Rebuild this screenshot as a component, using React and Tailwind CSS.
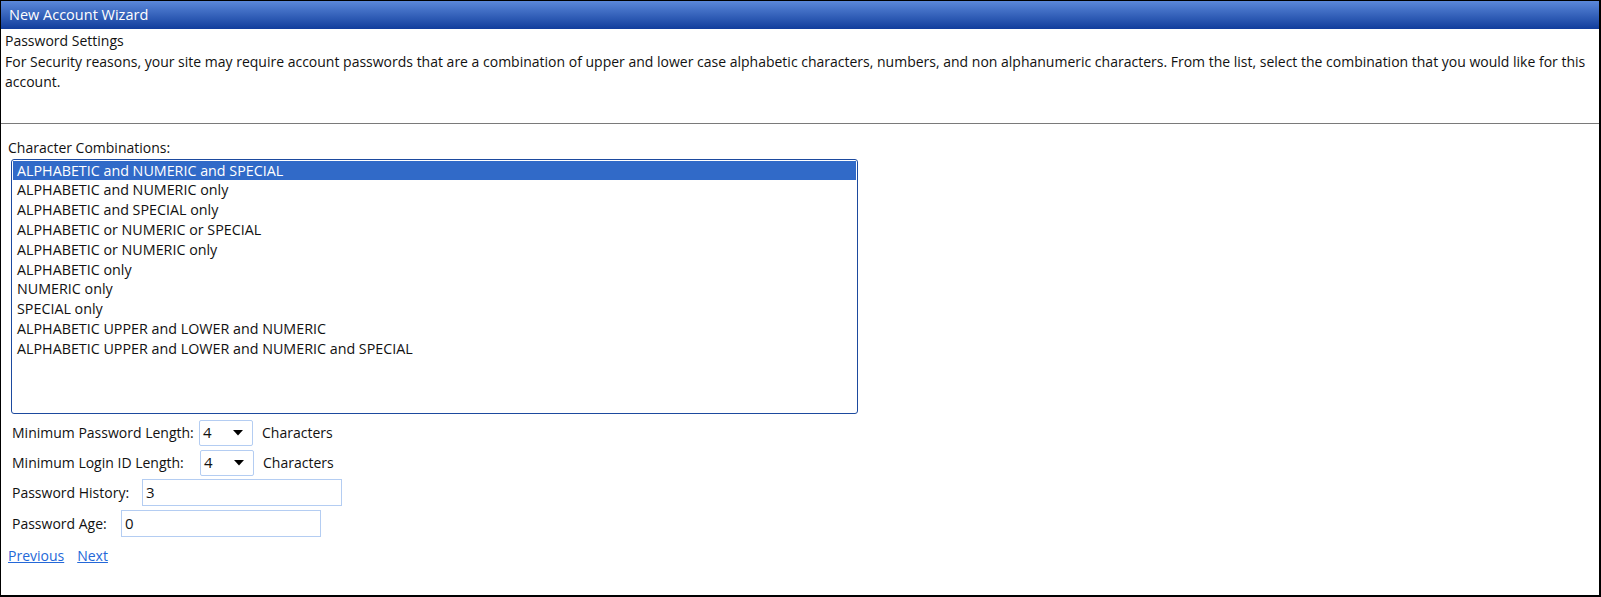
import React from "react";

const items = [
  "ALPHABETIC and NUMERIC and SPECIAL",
  "ALPHABETIC and NUMERIC only",
  "ALPHABETIC and SPECIAL only",
  "ALPHABETIC or NUMERIC or SPECIAL",
  "ALPHABETIC or NUMERIC only",
  "ALPHABETIC only",
  "NUMERIC only",
  "SPECIAL only",
  "ALPHABETIC UPPER and LOWER and NUMERIC",
  "ALPHABETIC UPPER and LOWER and NUMERIC and SPECIAL",
];

function Select({ value }) {
  return (
    <div className="flex h-[26px] w-[54px] items-center justify-between rounded-[2px] border border-[#b4cdf2] bg-white pl-[3px] pr-[9px]">
      <span className="text-[15px]">{value}</span>
      <svg width="10" height="6" viewBox="0 0 10 6">
        <path d="M0 0 H10 L5 5.5 Z" fill="#000" />
      </svg>
    </div>
  );
}

export default function App() {
  return (
    <div
      className="box-border flex h-[597px] w-[1601px] flex-col border-t border-l border-r-2 border-b-2 border-black bg-white text-[14px] text-[#111]"
      style={{ fontFamily: '"Open Sans", "Noto Sans", sans-serif' }}
    >
      <div className="flex h-[28px] items-center bg-gradient-to-b from-[#5b88da] to-[#113d9c] pl-[8px] text-[14.5px] text-white">
        New Account Wizard
      </div>
      <div className="h-[94px] pl-[4px] pt-[2px] leading-[20.5px]">
        <div>Password Settings</div>
        <div className="whitespace-nowrap">
          For Security reasons, your site may require account passwords that are a combination of upper and lower case alphabetic characters, numbers, and non alphanumeric characters. From the list, select the combination that you would like for this
        </div>
        <div>account.</div>
      </div>
      <div className="h-px bg-[#7a7a7a]" />
      <div className="pl-[7px] pt-[14px] leading-[20px]">Character Combinations:</div>
      <div className="ml-[10px] mt-[1px] h-[255px] w-[847px] rounded-[3px] border-[1.5px] border-[#1d4a9e] px-[1px] pt-0">
        {items.map((t, i) => (
          <div
            key={t}
            className={
              "flex h-[19.8px] items-center pl-[4px] text-[14.3px] " +
              (i === 0 ? "mt-[0.5px] bg-[#316ac8] text-white" : "")
            }
          >
            {t}
          </div>
        ))}
      </div>
      <div className="mt-[5px] flex flex-col gap-[3px] pl-[11px]">
        <div className="flex h-[27px] items-center">
          <span className="w-[187px]">Minimum Password Length:</span>
          <Select value="4" />
          <span className="ml-[9px]">Characters</span>
        </div>
        <div className="flex h-[27px] items-center">
          <span className="w-[188px]">Minimum Login ID Length:</span>
          <Select value="4" />
          <span className="ml-[9px]">Characters</span>
        </div>
        <div className="flex h-[27px] items-center">
          <span className="w-[130px]">Password History:</span>
          <div className="flex h-[27px] w-[200px] items-center border border-[#b4cdf2] pl-[3px] text-[15px]">3</div>
        </div>
        <div className="mt-[1px] flex h-[27px] items-center">
          <span className="w-[109px]">Password Age:</span>
          <div className="flex h-[27px] w-[200px] items-center border border-[#b4cdf2] pl-[3px] text-[15px]">0</div>
        </div>
      </div>
      <div className="mt-[9px] flex gap-[13px] pl-[7px] leading-[20px]">
        <a href="#" className="text-[#2468d8] underline">Previous</a>
        <a href="#" className="text-[#2468d8] underline">Next</a>
      </div>
    </div>
  );
}
